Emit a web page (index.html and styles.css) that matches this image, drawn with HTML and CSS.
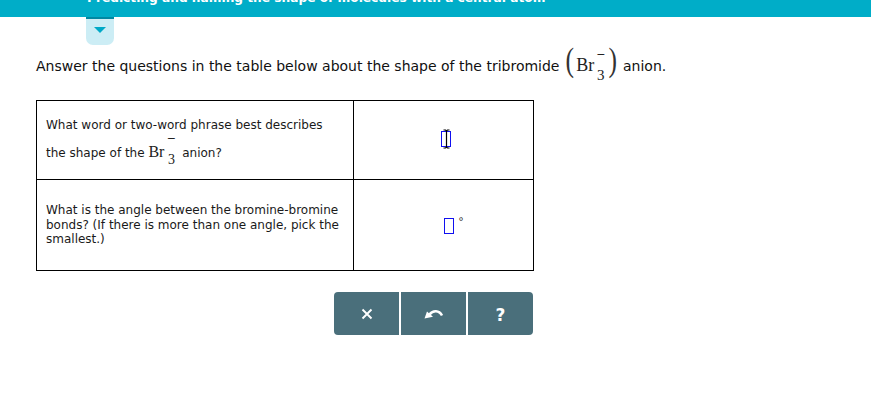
FILE: index.html
```html
<!DOCTYPE html>
<html>
<head>
<meta charset="utf-8">
<link rel="stylesheet" href="styles.css">
</head>
<body>
<div class="topbar"><div class="title">Predicting and naming the shape of molecules with a central atom</div></div>
<div class="tab"><span class="tri"></span></div>
<div class="prompt">Answer the questions in the table below about the shape of the tribromide <span class="paren">(</span><span class="chem big">Br<span class="subsup"><span class="sup">−</span><span class="sub">3</span></span></span><span class="paren">)</span> anion.</div>
<table class="qtable">
  <colgroup><col class="c1"><col class="c2"></colgroup>
  <tr class="row1">
    <td class="qcell q1">What word or two-word phrase best describes<br>the shape of the <span class="chem small">Br<span class="subsup"><span class="sup">−</span><span class="sub">3</span></span></span> anion?</td>
    <td class="acell"><span class="ansbox a1"><span class="box"></span><svg class="cursor" width="9" height="20" viewBox="0 0 9 20"><path d="M1.5 1 L3.5 1 L4.5 2 L5.5 1 L7.5 1 M4.5 2 L4.5 18 M1.5 19 L3.5 19 L4.5 18 L5.5 19 L7.5 19" fill="none" stroke="#000" stroke-width="1.2"/></svg></span></td>
  </tr>
  <tr class="row2">
    <td class="qcell q2">What is the angle between the bromine-bromine bonds? (If there is more than one angle, pick the smallest.)</td>
    <td class="acell"><span class="ansbox a2"><span class="box"></span><span class="deg">°</span></span></td>
  </tr>
</table>
<div class="tools">
  <button class="tbtn" aria-label="clear"><svg width="12" height="12" viewBox="0 0 12 12"><path d="M1.5 1.5 L10.5 10.5 M10.5 1.5 L1.5 10.5" stroke="#fff" stroke-width="1.9"/></svg></button>
  <button class="tbtn" aria-label="undo"><svg width="22" height="14" viewBox="0 0 22 14"><path d="M6.5 7.5 C10 3, 16 3, 19 8.5" fill="none" stroke="#fff" stroke-width="2.6"/><path d="M1.5 11.5 L4 4.5 L10 9.8 Z" fill="#fff"/></svg></button>
  <button class="tbtn qmark" aria-label="help">?</button>
</div>
</body>
</html>
```
FILE: styles.css
```css
html, body {
  margin: 0;
  padding: 0;
  background: #fff;
}
body {
  font-family: "DejaVu Sans", Verdana, sans-serif;
  color: #111;
  width: 871px;
  height: 403px;
  overflow: hidden;
}
.topbar {
  height: 17px;
  background: #00adc8;
  overflow: hidden;
}
.title {
  color: #fff;
  font-weight: bold;
  font-size: 12.2px;
  line-height: 16px;
  margin-top: -10px;
  padding-left: 87px;
  white-space: nowrap;
}
.tab {
  margin-left: 86px;
  width: 28px;
  height: 26px;
  background: #ccedf5;
  border-top: 2px solid #0088a2;
  border-radius: 0 0 7px 7px;
  display: flex;
  justify-content: center;
}
.tri {
  margin-top: 8px;
  width: 0;
  height: 0;
  border-left: 6px solid transparent;
  border-right: 6px solid transparent;
  border-top: 6px solid #00a9c7;
}
.prompt {
  margin: 6px 0 0 36px;
  height: 30px;
  line-height: 30px;
  font-size: 14px;
  white-space: nowrap;
}
.paren {
  font-family: "Liberation Serif", "Times New Roman", serif;
  font-size: 34px;
  line-height: 0;
  color: #333;
  display: inline-block;
  transform: scaleX(0.75);
}
.chem {
  font-family: "Liberation Serif", "Times New Roman", serif;
  color: #222;
  line-height: 1;
}
.chem.big {
  font-size: 18px;
  margin: 0 1px;
}
.chem.small {
  font-size: 16px;
}
.subsup {
  display: inline-block;
  line-height: 0;
  text-align: center;
  width: 10px;
  margin-left: 1px;
}
.sup, .sub {
  display: block;
  line-height: 0;
}
.sup {
  font-family: "DejaVu Sans", sans-serif;
  font-size: 11px;
  margin-top: -10px;
}
.big .subsup { vertical-align: -8.5px; width: 11px; margin-left: 1px; margin-right: 0; }
.big .sub { font-size: 15px; margin-top: 20px; }
.small .subsup { vertical-align: -7px; margin-right: 2px; margin-left: 2px; }
.small .sub { font-size: 14px; margin-top: 21px; }
.qtable {
  margin: 19px 0 0 36px;
  border-collapse: collapse;
  table-layout: fixed;
  width: 497px;
}
.c1 { width: 317px; }
.c2 { width: 180px; }
.qtable td {
  border: 1px solid #000;
  padding: 0;
  vertical-align: middle;
}
.row1 { height: 79px; }
.row2 { height: 91px; }
.qcell {
  padding: 0 6px 0 9px !important;
  font-size: 12px;
  color: #1a1a1a;
}
.q1 { line-height: 28px; padding-bottom: 2px !important; }
.q2 { line-height: 14.5px; }
.acell {
  text-align: center;
}
.ansbox {
  position: relative;
  display: inline-flex;
  align-items: flex-start;
}
.box {
  display: inline-block;
  width: 8px;
  height: 14px;
  border: 1.5px solid #1010f0;
}
.a1 { margin-left: 5px; margin-top: 2px; }
.a2 { margin-left: 21px; margin-top: 6px; }
.cursor {
  position: absolute;
  left: 1px;
  top: -2px;
}
.deg {
  font-size: 11px;
  line-height: 10px;
  margin-left: 4px;
  margin-top: -1px;
  color: #333;
}
.tools {
  margin: 21px 0 0 334px;
  display: flex;
  gap: 2px;
}
.tbtn {
  width: 65px;
  height: 43px;
  border: none;
  padding: 0;
  background: #4a6f7b;
  color: #fff;
  display: flex;
  align-items: center;
  justify-content: center;
  font-family: "DejaVu Sans", sans-serif;
}
.tbtn:first-child { border-radius: 4px 0 0 4px; }
.tbtn:last-child { border-radius: 0 4px 4px 0; }
.qmark {
  font-size: 17px;
  font-weight: bold;
  padding-top: 2px;
}
```
